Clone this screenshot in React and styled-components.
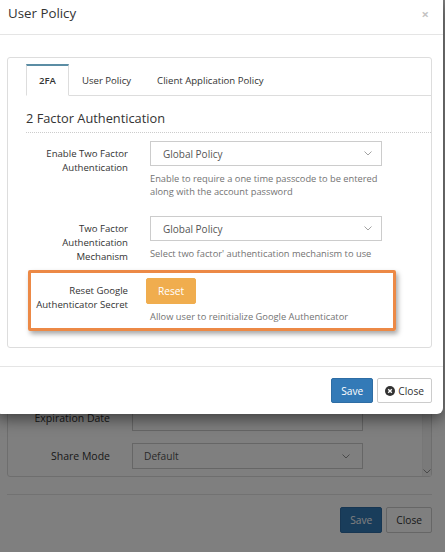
import React from "react";
import styled, { createGlobalStyle } from "styled-components";

const GlobalStyle = createGlobalStyle`
  html, body {
    margin: 0;
    padding: 0;
    background: #fff;
  }
  body {
    font-family: "Open Sans", "Liberation Sans", sans-serif;
    color: #333;
    overflow: hidden;
  }
  * {
    box-sizing: border-box;
  }
`;

const Page = styled.div`
  position: relative;
  width: 445px;
  height: 552px;
  overflow: hidden;
  background: #fff;
`;

/* ---------- modal behind (dimmed) ---------- */

const BackModal = styled.div`
  display: flex;
  flex-direction: column;
  height: 100%;
  padding: 40px 13px 0 7px;
`;

const BackPanel = styled.div`
  height: 437px;
  border: 1px solid #ddd;
  border-radius: 3px;
  display: flex;
  flex-direction: column;
  justify-content: flex-end;
  padding: 0 0 7px 0;
  position: relative;
`;

const Scrollbar = styled.div`
  position: absolute;
  right: 0;
  top: 0;
  bottom: 0;
  width: 9px;
  background: #f4f4f4;
  border-left: 1px solid #eee;
  display: flex;
  align-items: flex-end;
  justify-content: center;
  padding-bottom: 2px;
`;

const BackRow = styled.div`
  display: grid;
  grid-template-columns: 102px 231px;
  column-gap: 22px;
  align-items: center;
  margin-bottom: ${(p) => (p.last ? "0" : "12px")};
`;

const BackLabel = styled.div`
  text-align: right;
  font-size: 10.5px;
  color: #333;
`;

const BackInput = styled.div`
  height: 26px;
  border: 1px solid #ccc;
  display: flex;
  align-items: center;
  justify-content: space-between;
  padding: 0 12px 0 11px;
  font-size: 10.2px;
  color: #555;
`;

const BackFooter = styled.div`
  margin-top: 17px;
  border-top: 1px solid #e5e5e5;
  padding: 12px 0 0 0;
  display: flex;
  justify-content: flex-end;
  gap: 4px;
`;

const Backdrop = styled.div`
  position: absolute;
  inset: 0;
  background: rgba(0, 0, 0, 0.5);
`;

/* ---------- front modal ---------- */

const Modal = styled.div`
  position: absolute;
  top: 0;
  left: -4px;
  width: 447px;
  background: #fff;
  border-radius: 0 0 6px 6px;
  box-shadow: 0 5px 15px rgba(0, 0, 0, 0.5);
`;

const Header = styled.div`
  display: flex;
  align-items: flex-start;
  justify-content: space-between;
  padding: 3px 12px 10px 12px;
  border-bottom: 1px solid #e5e5e5;
  height: 35px;
`;

const Title = styled.h4`
  margin: 0;
  font-size: 13.3px;
  line-height: 21px;
  font-weight: 400;
  color: #333;
`;

const Dismiss = styled.span`
  font-size: 13px;
  line-height: 16px;
  margin-top: 3px;
  margin-right: 2px;
  color: #c4c4c4;
  font-weight: 700;
`;

const Body = styled.div`
  padding: 22px 11px 18px 11px;
`;

const Panel = styled.div`
  border: 1px solid #ddd;
  border-radius: 3px;
  padding: 6px 0 6px 18px;
`;

const Tabs = styled.div`
  display: flex;
  border-bottom: 1px solid #ddd;
  height: 32px;
`;

const Tab = styled.div`
  padding: 0 12px;
  font-size: 9.6px;
  line-height: 29px;
  color: #333;
  font-weight: ${(p) => (p.active ? 600 : 400)};
  border: 1px solid transparent;
  border-top: 2px solid transparent;
  margin-bottom: -1px;
  ${(p) =>
    p.active &&
    `
    border-color: #ddd;
    border-top-color: #5b8da4;
    border-bottom-color: #fff;
    background: #fff;
  `}
`;

const Heading = styled.h3`
  margin: 13px 0 0 0;
  padding-bottom: 5px;
  font-size: 12.8px;
  line-height: 18px;
  font-weight: 400;
  color: #333;
  border-bottom: 1px dotted #ccc;
`;

const Form = styled.div`
  padding-top: 8px;
`;

const Row = styled.div`
  position: relative;
  display: grid;
  grid-template-columns: 102px 232px;
  column-gap: 22px;
  margin-bottom: 11px;

  ${(p) =>
    p.highlight &&
    `
    &::before {
      content: "";
      position: absolute;
      top: -8px;
      bottom: -1px;
      left: 2px;
      right: 35px;
      border: 3px solid #ec8946;
      border-radius: 2px;
      box-shadow: 2px 3px 5px rgba(0, 0, 0, 0.35);
      pointer-events: none;
    }
  `}
`;

const Label = styled.div`
  text-align: right;
  padding-top: 6px;
  font-size: 9.6px;
  line-height: 14px;
  color: #333;
`;

const Control = styled.div`
  display: flex;
  flex-direction: column;
  align-items: flex-start;
`;

const Select = styled.div`
  width: 100%;
  height: 25px;
  border: 1px solid #ccc;
  display: flex;
  align-items: center;
  justify-content: space-between;
  padding: 0 9px 0 12px;
  font-size: 10px;
  color: #555;
`;

const Help = styled.div`
  margin: 6px 0 7px 0;
  font-size: 9.3px;
  line-height: 13px;
  color: #737373;
  white-space: nowrap;
`;

const Button = styled.button`
  height: ${(p) => p.h || 25}px;
  padding: 0 ${(p) => p.px || 8}px;
  margin-left: ${(p) => p.shift || 0}px;
  font-family: inherit;
  font-size: 10.2px;
  border-radius: 2px;
  display: inline-flex;
  align-items: center;
  gap: 3px;
  cursor: pointer;
  border: 1px solid
    ${(p) =>
      p.variant === "primary"
        ? "#2e6da4"
        : p.variant === "warning"
        ? "#f0ad4e"
        : "#ccc"};
  background: ${(p) =>
    p.variant === "primary"
      ? "#337ab7"
      : p.variant === "warning"
      ? "#f0ad4e"
      : "#fff"};
  color: ${(p) => (p.variant === "default" ? "#333" : "#fff")};
`;

const Footer = styled.div`
  border-top: 1px solid #e5e5e5;
  padding: 11px 11px 11px 11px;
  display: flex;
  justify-content: flex-end;
  gap: 4px;
`;

const Chevron = ({ color = "#999" }) => (
  <svg width="8" height="5" viewBox="0 0 8 5">
    <polyline
      points="0.5,0.5 4,4 7.5,0.5"
      fill="none"
      stroke={color}
      strokeWidth="0.9"
    />
  </svg>
);

const TimesCircle = () => (
  <svg width="10" height="10" viewBox="0 0 10 10">
    <circle cx="5" cy="5" r="5" fill="#333" />
    <path d="M3.2 3.2 L6.8 6.8 M6.8 3.2 L3.2 6.8" stroke="#fff" strokeWidth="1.4" />
  </svg>
);

const FormRow = ({ label, value, help, highlight, children }) => (
  <Row highlight={highlight}>
    <Label>{label}</Label>
    <Control>
      {children || (
        <Select>
          {value}
          <Chevron />
        </Select>
      )}
      <Help>{help}</Help>
    </Control>
  </Row>
);

export default function App() {
  return (
    <>
      <GlobalStyle />
      <Page>
        <BackModal>
          <BackPanel>
            <BackRow>
              <BackLabel>Expiration Date</BackLabel>
              <BackInput />
            </BackRow>
            <BackRow last>
              <BackLabel>Share Mode</BackLabel>
              <BackInput>
                Default
                <Chevron color="#888" />
              </BackInput>
            </BackRow>
            <Scrollbar>
              <Chevron color="#888" />
            </Scrollbar>
          </BackPanel>
          <BackFooter>
            <Button variant="primary" h={26} px={9}>
              Save
            </Button>
            <Button variant="default" h={26} px={9}>
              Close
            </Button>
          </BackFooter>
        </BackModal>
        <Backdrop />

        <Modal>
          <Header>
            <Title>User Policy</Title>
            <Dismiss>×</Dismiss>
          </Header>
          <Body>
            <Panel>
              <Tabs>
                <Tab active>2FA</Tab>
                <Tab>User Policy</Tab>
                <Tab>Client Application Policy</Tab>
              </Tabs>
              <Heading>2 Factor Authentication</Heading>
              <Form>
                <FormRow
                  label={
                    <>
                      Enable Two Factor
                      <br />
                      Authentication
                    </>
                  }
                  value="Global Policy"
                  help={
                    <>
                      Enable to require a one time passcode to be entered
                      <br />
                      along with the account password
                    </>
                  }
                />
                <FormRow
                  label={
                    <>
                      Two Factor
                      <br />
                      Authentication
                      <br />
                      Mechanism
                    </>
                  }
                  value="Global Policy"
                  help="Select two factor' authentication mechanism to use"
                />
                <FormRow
                  highlight
                  label={
                    <>
                      Reset Google
                      <br />
                      Authenticator Secret
                    </>
                  }
                  help="Allow user to reinitialize Google Authenticator"
                >
                  <Button variant="warning" h={26} px={11} shift={-4}>
                    Reset
                  </Button>
                </FormRow>
              </Form>
            </Panel>
          </Body>
          <Footer>
            <Button variant="primary" px={9}>
              Save
            </Button>
            <Button variant="default" px={7}>
              <TimesCircle />
              Close
            </Button>
          </Footer>
        </Modal>
      </Page>
    </>
  );
}
